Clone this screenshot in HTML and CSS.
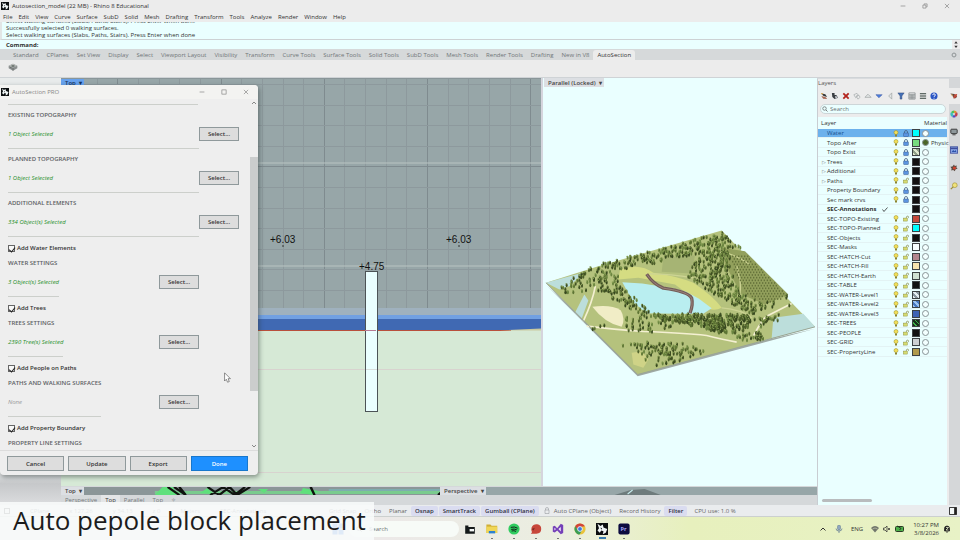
FILE: index.html
```html
<!DOCTYPE html>
<html lang="en">
<head>
    <meta charset="UTF-8">
    <meta name="viewport" content="width=device-width, initial-scale=1.0">
    <title>Autosection_model - Rhino 8 Educational</title>
    <link rel="stylesheet" href="styles.css">
</head>
<body>
    <svg class="defs" aria-hidden="true">
        <symbol id="rhino" viewBox="0 0 16 16"><rect width="16" height="16" fill="#0c0f10"/><path d="M2 1l4 3 3-2 1 4 5 2-2 5-4 2 1-4-3-1-2 3-3-3 2-3z" fill="#eef4f4"/><path d="M6 6l2 1-1 2z" fill="#0c0f10"/></symbol>
        <symbol id="bulb" viewBox="0 0 12 14"><circle cx="6" cy="5" r="4" fill="#f2e05a" stroke="#9a8a20"/><path d="M4 9h4v4H4z" fill="#8b8430"/></symbol>
        <symbol id="locked" viewBox="0 0 12 14"><path d="M3 7V4a3 3 0 0 1 6 0v3" fill="none" stroke="#4a5f80" stroke-width="1.6"/><rect x="1.500" y="6" width="9" height="7" fill="#5b94e0" stroke="#35588c"/></symbol>
        <symbol id="unlocked" viewBox="0 0 14 14"><path d="M8 7V4a2.500 2.500 0 0 1 5 0v2" fill="none" stroke="#7d7d3a" stroke-width="1.500"/><rect x="1" y="6" width="9" height="7" fill="#d6dc72" stroke="#868630"/></symbol>
        <symbol id="gear" viewBox="0 0 12 12"><circle cx="6" cy="6" r="3.500" fill="none" stroke="#8d9294" stroke-width="1.400"/><path d="M6 0v3M6 9v3M0 6h3M9 6h3M2 2l2 2M8 8l2 2M10 2L8 4M4 8l-2 2" stroke="#8d9294"/></symbol>
        <symbol id="min" viewBox="0 0 10 10"><path d="M1 5h8" stroke="#777"/></symbol>
        <symbol id="max" viewBox="0 0 10 10"><rect x="1.500" y="1.500" width="7" height="7" fill="none" stroke="#777"/></symbol>
        <symbol id="restore" viewBox="0 0 10 10"><path d="M1.500 3.500h5v5h-5zM3.500 3V1.500h5v5H7" fill="none" stroke="#777"/></symbol>
        <symbol id="close" viewBox="0 0 10 10"><path d="M1.500 1.500l7 7M8.500 1.500l-7 7" stroke="#777"/></symbol>
        <symbol id="lens" viewBox="0 0 12 12"><circle cx="5" cy="5" r="3.500" fill="none" stroke="#555" stroke-width="1.300"/><path d="M8 8l3 3" stroke="#555" stroke-width="1.500"/></symbol>
    </svg>

    <header class="titlebar">
        <svg class="icon"><use href="#rhino"/></svg>
        <h1>Autosection_model (22 MB) - Rhino 8 Educational</h1>
        <div class="window-controls">
            <button aria-label="Minimize"><svg><use href="#min"/></svg></button>
            <button aria-label="Restore"><svg><use href="#restore"/></svg></button>
            <button aria-label="Close"><svg><use href="#close"/></svg></button>
        </div>
    </header>

    <nav class="menubar">
        <button>File</button><button>Edit</button><button>View</button><button>Curve</button><button>Surface</button><button>SubD</button><button>Solid</button><button>Mesh</button><button>Drafting</button><button>Transform</button><button>Tools</button><button>Analyze</button><button>Render</button><button>Window</button><button>Help</button>
    </nav>

    <section class="command">
        <div class="history">
            <p>Select walking surfaces (Slabs, Paths, Stairs). Press Enter when done</p>
            <p>Successfully selected 0 walking surfaces.</p>
            <p>Select walking surfaces (Slabs, Paths, Stairs). Press Enter when done</p>
        </div>
        <div class="prompt">
            <label for="command">Command:</label>
            <input id="command" type="text">
            <svg class="spinner" viewBox="0 0 8 16"><path d="M1 6l3-4 3 4zM1 10l3 4 3-4z" fill="#333"/></svg>
        </div>
    </section>

    <nav class="tool-tabs">
        <button>Standard</button><button>CPlanes</button><button>Set View</button><button>Display</button><button>Select</button><button>Viewport Layout</button><button>Visibility</button><button>Transform</button><button>Curve Tools</button><button>Surface Tools</button><button>Solid Tools</button><button>SubD Tools</button><button>Mesh Tools</button><button>Render Tools</button><button>Drafting</button><button>New in V8</button><button class="active">AutoSection</button>
        <svg class="gear"><use href="#gear"/></svg>
    </nav>

    <div class="toolbar">
        <button aria-label="AutoSection">
            <svg viewBox="0 0 30 24"><path d="M2 8L15 2l13 6v8l-13 7L2 16z" fill="#8b8f8f"/><path d="M2 8l13 6 13-6-13-6z" fill="#b9bdbb"/><path d="M8 9l7-3 7 3-7 3z" fill="#636b66"/><path d="M15 14v9M6 13l5 2" stroke="#5d6260" stroke-width="2"/></svg>
        </button>
    </div>

    <main class="workspace">
        <aside class="left-tools"></aside>

        <div class="viewports">
            <div class="pane top-pane">
                <button class="pane-label selected">Top <span>▾</span></button>
                <svg class="scene" viewBox="61 79 480 407" preserveAspectRatio="xMinYMin slice">
                    <rect x="61" y="79" width="1200" height="232" fill="#97a6a8"/>
                    <g id="grid"></g>
                    <path d="M61 163h1200M61 266h1200" stroke="#b9c4c2"/>
                    <rect x="61" y="308" width="1200" height="8" fill="#9fb1be"/>
                    <rect x="61" y="315" width="1200" height="5" fill="#71a0e2"/>
                    <rect x="61" y="319" width="1200" height="11" fill="#4069b3"/>
                    <rect x="61" y="330" width="1200" height="600" fill="#d6e9d6"/>
                    <path d="M61 330.500h450" stroke="#b9503c"/>
                    <path d="M500 330.500l41-2v2z" fill="#c9c9a0"/>
                    <path d="M61 369.500h1200M61 472.500h1200" stroke="#d8d3cf"/>
                    <rect x="365.500" y="271.500" width="12" height="140" fill="#eaffff" stroke="#4c5356"/>
                    <path d="M365 330.500h11" stroke="#b77a92"/><path d="M366 369.500h11" stroke="#d9dfdc"/>
                    <text x="270" y="243">+6.03</text>
                    <text x="446" y="243">+6.03</text>
                    <text x="359" y="270">+4.75</text>
                    <path d="M282 246h2M458 246h2" stroke="#333"/>
                </svg>
            </div>

            <div class="pane parallel-pane">
                <button class="pane-label">Parallel (Locked) <span>▾</span></button>
                <svg class="scene" viewBox="9 -423 822 1221">
                    <path d="M18 196L293 470l532-142-530 122z" fill="#9fa9a4"/>
                    <path d="M18 190L170 142 545 33 825 322 293 465z" fill="#b5c27d"/>
                    <path d="M18 190l115-32-45 42-30 10zM105 280l28-55 12 18-20 55zM700 295l90-12 35 39-130 34z" fill="#bcdedb"/>
                    <path d="M545 85l70 10 130 130-70 30-70-30-50-90z" fill="#92a05c"/>
                    <path d="M370 115l95-8-10 55-90-5z" fill="#a6b474"/>
                    <path d="M240 150q60-20 100 10 70 10 120 30 60 40 85 75-30 15-60-10l-80-60-110-20-60 5z" fill="#d5dc82"/>
                    <path d="M247 188l60 4 90 14 40 10 40 22 38 28-25 17-80 0-90-2-40-32z" fill="#b9eef0"/>
                    <path d="M320 164q20 30 50 42 75 10 85 30 5 20-5 45" fill="none" stroke="#735d58" stroke-width="10"/>
                    <path d="M320 164q20 30 50 42 75 10 85 30 5 20-5 45" fill="none" stroke="#9a817a" stroke-width="3"/>
                    <path d="M157 262q55-8 85 10 15 25 3 50-50-10-88-60z" fill="#f1edc6"/>
                    <path d="M166 200q-8 45-36 105M140 320q80 10 170 16 120 4 190 12 50 12 90 20M640 350q20-40 40-60 30-15 75-38" fill="none" stroke="#f4f0d2" stroke-width="5"/>
                    <path d="M330 163q60 0 130 12M590 140q15 50 10 80M480 95q80-10 150 40M545 265q60 5 90 30" fill="none" stroke="#cdd494" stroke-width="4"/>
                    <path d="M18 190L293 465 825 322" fill="none" stroke="#9aa596" stroke-width="3"/>
                    <path d="M275 400l30-5 20 25-15 25-30-10z" fill="#cfd387"/>
                    <g id="trees"></g>
                </svg>
            </div>

            <div class="pane lower-pane">
                <button class="pane-label">Top <span>▾</span></button>
                <svg class="strip" viewBox="0 0 355 8" preserveAspectRatio="none">
                    <rect width="355" height="8" fill="#8b9698"/>
                    <path d="M55 4h300v3H55z" fill="#7acb8e"/>
                    <path d="M55 8l6-8h8l4 8zM90 6l6-5 4 6zM135 2h8l-3 4zM170 1l12 3-4 4-10-2zM285 2h25v5h-25z" fill="#5fe07c"/>
                    <path d="M190 3h165" stroke="#73c4c4"/>
                    <path d="M65 0l9 8M70 0l9 8M74 0l5 8M96 0l9 8 8-8 6 8 10-8M98 8l10-8 9 8 8-8M176 0l3 8M275 8l7-8M280 8l7-8M315 0v8" stroke="#10130f" stroke-width="2" fill="none"/>
                </svg>
            </div>

            <div class="pane lower-pane">
                <button class="pane-label">Perspective <span>▾</span></button>
                <svg class="strip" viewBox="0 0 330 8" preserveAspectRatio="none">
                    <rect width="330" height="8" fill="#97a6a8"/>
                    <path d="M128 8l16-5 14-1 16 6z" fill="#6e7b7c"/><path d="M141 7l5-4" stroke="#c9eef0"/>
                </svg>
            </div>

            <nav class="view-tabs">
                <button>Perspective</button><button class="active">Top</button><button>Parallel</button><button>Top</button><button>✧</button>
            </nav>
        </div>

        <aside class="layers">
            <div class="layers-title"><h2>Layers</h2><svg class="gear"><use href="#gear"/></svg></div>
            <div class="layers-tools">
                <button aria-label="New layer"><svg viewBox="0 0 18 18"><path d="M2 3l10 2 4 6-8-2z" fill="#35393b"/><path d="M3 9l10 3 3 4-9-1z" fill="#a96a55"/><path d="M2 2l5 1-2 4z" fill="#e0a94c"/></svg></button>
                <button aria-label="New sublayer"><svg viewBox="0 0 18 18"><path d="M2 2h6v5h4l4 6-8 3-5-5z" fill="#3a3e42"/><path d="M9 9l5 1 1 4-5 0z" fill="#c8cbd0"/></svg></button>
                <button aria-label="Delete"><svg viewBox="0 0 18 18"><path d="M3 3l12 12M15 3L3 15" stroke="#b3221c" stroke-width="4"/></svg></button>
                <button aria-label="Duplicate"><svg viewBox="0 0 18 18"><path d="M2 6l7-3 3 5-6 5zM7 9l6-2 3 5-5 4z" fill="none" stroke="#a3a9aa" stroke-width="1.500"/></svg></button>
                <button aria-label="Move up"><svg viewBox="0 0 18 18"><path d="M2 12l7-7 7 7z" fill="#e2e6e6" stroke="#999f9f" stroke-width="1.500"/></svg></button>
                <button aria-label="Move down"><svg viewBox="0 0 18 18"><path d="M2 6l7 7 7-7z" fill="#4f7fe0" stroke="#2a4790"/></svg></button>
                <button aria-label="Move left"><svg viewBox="0 0 18 18"><path d="M13 2L6 9l7 7z" fill="#e2e6e6" stroke="#999f9f" stroke-width="1.500"/></svg></button>
                <button aria-label="Filter"><svg viewBox="0 0 18 18"><path d="M2 2h14l-5 7v7H7V9z" fill="#4571b8" stroke="#28406e"/></svg></button>
                <button aria-label="Columns"><svg viewBox="0 0 18 18"><path d="M2 2h14v14H2zM2 6h14M2 9h14M2 13h14M7 6v10M11 6v10" fill="none" stroke="#777e80" stroke-width="1.500"/></svg></button>
                <button aria-label="Options"><svg viewBox="0 0 18 18"><path d="M2 4h14M2 9h14M2 14h14" stroke="#32403a" stroke-width="2.500"/></svg></button>
                <button aria-label="Help"><svg viewBox="0 0 18 18"><circle cx="9" cy="9" r="8" fill="#2a55c4"/><path d="M6 7q0-3 3-3t3 3q0 2-3 3v1M9 13v2" stroke="#fff" stroke-width="2" fill="none"/></svg></button>
            </div>
            <label class="search"><svg><use href="#lens"/></svg><input type="search" placeholder="Search" aria-label="Search layers"></label>
            <div class="layers-body">
                <table>
                    <colgroup><col><col class="c-check"><col class="c-bulb"><col class="c-lock"><col class="c-swatch"><col class="c-ball"><col class="c-material"></colgroup>
                    <thead><tr><th colspan="5">Layer</th><th colspan="2" class="material">Material</th></tr></thead>
                    <tbody id="layers"></tbody>
                </table>
                <div class="hscroll"></div>
            </div>
        </aside>

        <aside class="panel-tabs">
            <button aria-label="Properties"><svg viewBox="0 0 20 20"><path d="M1 4l10 1 7 7-6 5z" fill="#55463e"/><path d="M10 6l8-1-2 8-8 3z" fill="#c14838"/><path d="M2 5l5 2-1 4z" fill="#e8ae67"/></svg></button>
            <button aria-label="Display"><svg viewBox="0 0 20 20"><g fill="none" stroke-width="6"><path d="M10 4a6 6 0 0 1 5 3" stroke="#e0912f"/><path d="M15 7a6 6 0 0 1-2 8" stroke="#c43f4d"/><path d="M13 15a6 6 0 0 1-6 0" stroke="#5949c0"/><path d="M7 15a6 6 0 0 1-2-8" stroke="#3dbcc0"/><path d="M5 7a6 6 0 0 1 5-3" stroke="#49c25b"/></g></svg></button>
            <button aria-label="Monitor"><svg viewBox="0 0 20 20"><rect x="2" y="3" width="16" height="11" rx="2" fill="#8e989c" stroke="#222" stroke-width="2"/><path d="M6 17h8" stroke="#222" stroke-width="2"/></svg></button>
            <button aria-label="Layers"><svg viewBox="0 0 20 20"><rect x="1" y="2" width="18" height="16" fill="#8aa8e8" stroke="#3d4c9b" stroke-width="2"/><path d="M1 6h18" stroke="#3d4c9b" stroke-width="4"/><path d="M4 15l4-5 3 3 3-3 2 5z" fill="#2c50a8"/></svg></button>
            <button aria-label="Rendering"><svg viewBox="0 0 20 20"><path d="M10 1l2 4 5-1-1 5 3 3-5 1-2 5-4-3-5 1 1-5-3-4 5-1z" fill="#5c4b42"/><circle cx="11" cy="10" r="4" fill="#d2432e"/></svg></button>
            <button aria-label="Notes"><svg viewBox="0 0 20 20"><circle cx="12" cy="8" r="6" fill="#f0e27a" stroke="#9c8d34" stroke-width="1.500"/><path d="M8 12l-6 6" stroke="#9c8d34" stroke-width="3"/></svg></button>
        </aside>
    </main>

    <footer class="statusbar">
        <div class="coords"><i class="box"></i><span>CPlane</span><span>x 127.26</span><span>y 34.13</span><span>z 0</span><span>Meters</span><span>SEC-Annotations</span></div>
        <button>Grid Snap</button><button>Ortho</button><button>Planar</button><button class="on">Osnap</button><button class="on">SmartTrack</button><button class="on">Gumball (CPlane)</button>
        <button class="auto"><svg viewBox="0 0 12 14"><path d="M3 6V4a3 3 0 0 1 6 0v2M2 6h8v7H2z" fill="none" stroke="#8a8f92"/></svg>Auto CPlane (Object)</button><button>Record History</button><button class="on">Filter</button><span class="cpu">CPU use: 1.0 %</span>
        <svg class="dock" viewBox="0 0 14 14"><rect x="1" y="1" width="12" height="12" fill="#f3f7f7" stroke="#222" stroke-width="1.500"/><path d="M9 1h4v12H9z" fill="#222"/></svg>
    </footer>

    <footer class="taskbar">
        <div class="dock-icons">
            <button class="start" aria-label="Start"><svg viewBox="0 0 24 24"><path d="M1 1h10v10H1zM13 1h10v10H13zM1 13h10v10H1zM13 13h10v10H13z" fill="#2d74dc"/></svg></button>
            <label class="task-search"><svg><use href="#lens"/></svg><input type="search" placeholder="Search" aria-label="Search Windows"></label>
            <button aria-label="Task view"><svg viewBox="0 0 30 30"><path d="M3 6h8v4h16v17H3z" fill="#15191a"/><path d="M14 15h11v6H14z" fill="#f5f8f8"/></svg></button>
            <button class="running" aria-label="Files"><svg viewBox="0 0 30 30"><path d="M1 4h10l3 3h14v18H1z" fill="#cfae36"/><path d="M1 9h27v16H1z" fill="#f0d656"/><path d="M7 20h16v6H7z" fill="#2d83cf"/></svg></button>
            <button class="running" aria-label="Music"><svg viewBox="0 0 30 30"><circle cx="15" cy="15" r="14" fill="#30cc60"/><path d="M7 11q9-3 17 2M8 16q8-2 14 1M9 20q6-2 11 1" stroke="#10291a" stroke-width="2.500" fill="none"/></svg></button>
            <button class="running" aria-label="App"><svg viewBox="0 0 30 30"><path d="M4 11Q8 2 18 3q10 1 10 12 0 11-12 12H2l3-4q-3-4-1-12z" fill="#c7473b"/><path d="M4 15l8-3-3 7z" fill="#7e2a25"/></svg></button>
            <button class="running" aria-label="Studio"><svg viewBox="0 0 30 30"><path d="M2 9l5-2 6 6 9-11 6 3v20l-6 3-9-9-6 5-5-2z" fill="#7440b8"/><path d="M6 12v7l4-4zM22 10v11l-6-6z" fill="#efe5fa"/></svg></button>
            <button class="running" aria-label="Chrome"><svg viewBox="0 0 30 30"><circle cx="15" cy="15" r="14" fill="#e9c33a"/><path d="M3 8a14 14 0 0 1 24 0L15 10l-6 8z" fill="#d3453a"/><path d="M3 8a14 14 0 0 0 11 21l5-9-9-1z" fill="#3a9d55"/><circle cx="15" cy="15" r="6" fill="#3c7be0" stroke="#fff" stroke-width="2"/></svg></button>
            <button class="front" aria-label="Rhino"><svg><use href="#rhino"/></svg></button>
            <button class="running" aria-label="Premiere"><svg viewBox="0 0 30 30"><rect x="1" y="1" width="28" height="28" rx="5" fill="#0c0b40"/><text x="6" y="21" class="pr">Pr</text></svg></button>
        </div>
        <div class="tray">
            <svg viewBox="0 0 16 16"><path d="M3 11l5-5 5 5" fill="none" stroke="#333" stroke-width="2"/></svg>
            <svg viewBox="0 0 16 16"><rect x="5" y="0" width="6" height="10" rx="3" fill="#8fa6be" stroke="#5f7791"/><path d="M2 7q0 5 6 5t6-5M8 12v4" fill="none" stroke="#5f7791" stroke-width="1.500"/></svg>
            <span class="lang">ENG</span>
            <div class="net">
                <svg viewBox="0 0 16 16"><path d="M0 6q8-8 16 0l-8 9z" fill="#70766b"/><path d="M3 8q5-4 10 0" stroke="#e9efcb" fill="none"/></svg>
                <svg viewBox="0 0 16 16"><path d="M1 6h3l4-4v12l-4-4H1z" fill="none" stroke="#333" stroke-width="1.500"/><path d="M10 6l4 4M14 6l-4 4" stroke="#333" stroke-width="1.500"/></svg>
                <svg class="battery" viewBox="0 0 20 16"><rect x="1" y="3" width="16" height="10" rx="2" fill="#4db04a" stroke="#2a3b24" stroke-width="2"/><path d="M5 2l7 5-3 3" stroke="#23311f" stroke-width="2" fill="none"/></svg>
            </div>
            <div class="clock"><span>10:27 PM</span><span>3/8/2026</span></div>
            <svg viewBox="0 0 16 16"><path d="M3 12V7q0-5 5-5t5 5v5zM6 14h4" fill="#222" stroke="#222" stroke-width="1.500"/><path d="M6 5h5l-5 5h5" stroke="#eef3d0" stroke-width="1.500" fill="none"/></svg>
        </div>
    </footer>

    <section class="dialog" role="dialog" aria-labelledby="dialog-title">
        <div class="dialog-title">
            <svg class="icon"><use href="#rhino"/></svg>
            <h2 id="dialog-title">AutoSection PRO</h2>
            <div class="window-controls">
                <button aria-label="Minimize"><svg><use href="#min"/></svg></button>
                <button aria-label="Maximize"><svg><use href="#max"/></svg></button>
                <button aria-label="Close"><svg><use href="#close"/></svg></button>
            </div>
        </div>
        <div class="dialog-body">
            <div class="settings">
                <div class="group wide"><div class="info"><h3>EXISTING TOPOGRAPHY</h3><p>1 Object Selected</p></div><button class="btn">Select...</button></div>
                <div class="group wide"><div class="info"><h3>PLANNED TOPOGRAPHY</h3><p>1 Object Selected</p></div><button class="btn">Select...</button></div>
                <div class="group wide"><div class="info"><h3>ADDITIONAL ELEMENTS</h3><p>334 Object(s) Selected</p></div><button class="btn">Select...</button></div>
                <label class="check"><input type="checkbox" checked>Add Water Elements</label>
                <div class="group"><div class="info"><h3>WATER SETTINGS</h3><p>3 Object(s) Selected</p></div><button class="btn">Select...</button></div>
                <label class="check"><input type="checkbox" checked>Add Trees</label>
                <div class="group"><div class="info"><h3>TREES SETTINGS</h3><p>2390 Tree(s) Selected</p></div><button class="btn">Select...</button></div>
                <label class="check"><input type="checkbox" checked>Add People on Paths</label>
                <div class="group"><div class="info"><h3>PATHS AND WALKING SURFACES</h3><p class="none">None</p></div><button class="btn">Select...</button></div>
                <label class="check"><input type="checkbox" checked>Add Property Boundary</label>
                <div class="group"><div class="info"><h3>PROPERTY LINE SETTINGS</h3></div></div>
            </div>
            <div class="scrollbar">
                <svg viewBox="0 0 8 8"><path d="M2 5l2-2 2 2" fill="none" stroke="#888"/></svg>
                <div class="thumb"></div>
                <svg viewBox="0 0 8 8"><path d="M2 3l2 2 2-2" fill="none" stroke="#888"/></svg>
            </div>
        </div>
        <div class="dialog-actions">
            <button class="btn">Cancel</button>
            <button class="btn">Update</button>
            <button class="btn">Export</button>
            <button class="btn primary">Done</button>
        </div>
        <svg class="cursor" viewBox="0 0 12 18"><path d="M1 1v14l3-3 2 5 3-1-2-5h4z" fill="#fff" stroke="#444"/></svg>
    </section>

    <div class="caption">Auto pepole block placement</div>

    <script src="script.js"></script>
</body>
</html>
```
FILE: styles.css
```css
* {
    box-sizing: border-box;
}

body {
    margin: 0;
    min-height: 100vh;
    display: flex;
    flex-direction: column;
    position: relative;
    overflow: hidden;
    background: #ececec;
    color: #333;
    font-family: "Open Sans", "Noto Sans", sans-serif;
    font-size: 6px;
    line-height: 8px;
}

h1, h2, h3, p {
    margin: 0;
    font-size: inherit;
    font-weight: normal;
}

button, input {
    margin: 0;
    padding: 0;
    border: none;
    background: none;
    color: inherit;
    font: inherit;
}

svg {
    display: block;
}

.defs {
    position: absolute;
    width: 0;
    height: 0;
}

.gear {
    width: 6px;
    height: 6px;
}

/* title and menus */
.titlebar {
    display: flex;
    align-items: center;
    height: 12px;
    padding: 0 10px 0 1px;
    gap: 3px;
}

.icon {
    width: 8px;
    height: 8px;
}

.window-controls {
    display: flex;
    gap: 16px;
    margin-left: auto;
}

.window-controls svg {
    width: 6px;
    height: 6px;
}

.menubar {
    display: flex;
    gap: 6px;
    height: 10px;
    padding-left: 3px;
}

.command {
    background: #eaffff;
}

.history {
    height: 18px;
    display: flex;
    flex-direction: column;
    justify-content: flex-end;
    overflow: hidden;
    padding-left: 4px;
    border-left: 2px solid #e2e6e6;
    border-bottom: 1px solid #cdd2d4;
    line-height: 7px;
}

.history p {
    flex: none;
}

.prompt {
    display: flex;
    align-items: center;
    height: 9px;
    padding-left: 6px;
    gap: 2px;
    font-weight: bold;
}

.prompt input {
    flex: 1;
    min-width: 0;
    height: 8px;
}

.spinner {
    width: 8px;
    height: 9px;
    background: #ececec;
}

.tool-tabs {
    display: flex;
    align-items: center;
    height: 11px;
    padding: 0 3px 0 9px;
    background: #d6d9da;
    color: #707678;
}

.tool-tabs button {
    height: 11px;
    padding: 0 4px;
}

.tool-tabs .active {
    height: 10px;
    align-self: flex-end;
    border-radius: 3px 3px 0 0;
    background: #ececec;
    color: #333;
}

.tool-tabs .gear {
    margin-left: auto;
}

.toolbar {
    height: 18px;
    padding: 3px 8px;
    border-bottom: 1px solid #cfd3d6;
}

.toolbar svg {
    width: 10px;
    height: 8px;
}

/* workspace */
.workspace {
    flex: 1;
    min-height: 0;
    display: grid;
    grid-template-columns: 61px 1fr 132px 11px;
}

.left-tools {
    background: linear-gradient(#e8ebeb 92%, #c6c8ca 95%, #dcdddf);
}

.viewports {
    display: grid;
    grid-template-columns: 480fr 276fr;
    grid-template-rows: 1fr 9px 10px;
    min-height: 0;
    background: #d5d8da;
}

.pane {
    position: relative;
    min-width: 0;
    min-height: 0;
    overflow: hidden;
}

.pane-label {
    display: flex;
    align-items: center;
    gap: 3px;
    height: 8px;
    padding: 0 2px 0 4px;
    background: #dcdfe3;
    color: #444;
    font-weight: 600;
}

.top-pane .pane-label,
.parallel-pane .pane-label {
    position: absolute;
    top: 0;
    left: 0;
}

.parallel-pane .pane-label {
    left: 1px;
    height: 9px;
}

.pane-label.selected {
    background: #67a2ee;
    color: #16335c;
}

.scene {
    width: 100%;
    height: 100%;
}

.scene text {
    font: 10px "Liberation Sans", sans-serif;
    fill: #111;
}

.top-pane {
    border-top: 1px solid #8a9699;
}

.parallel-pane {
    border-left: 2px solid #d5d5dd;
    background: #eaffff;
}

.lower-pane {
    display: flex;
    padding-top: 1px;
    overflow: visible;
}

.lower-pane + .lower-pane {
    margin-left: -101px;
}

.strip {
    flex: 1;
    min-width: 0;
    height: 8px;
}

.view-tabs {
    grid-column: 1 / -1;
    display: flex;
    color: #74787b;
}

.view-tabs button {
    padding: 0 4px;
}

.view-tabs .active {
    background: #e4e6e7;
    color: #333;
}

/* layers */
.layers {
    display: flex;
    flex-direction: column;
    min-width: 0;
    min-height: 0;
    border-left: 1px solid #c9cdd2;
    border-top: 1px solid #d8dbde;
    padding: 0 2px 0 0;
}

.layers-title {
    display: flex;
    justify-content: space-between;
    align-items: center;
    height: 8px;
    margin-right: -9px;
    color: #555;
}

.layers-tools {
    display: flex;
    align-items: center;
    gap: 3px;
    height: 17px;
    padding-left: 2px;
}

.layers-tools svg {
    width: 8px;
    height: 8px;
}

.search {
    display: flex;
    align-items: center;
    gap: 2px;
    height: 10px;
    margin: 0 1px 3px 2px;
    padding-left: 1px;
    border: 1px solid #cdd6d8;
    border-radius: 5px;
    background: #eaffff;
}

.search svg,
.task-search svg {
    width: 6px;
    height: 6px;
}

.search input,
.task-search input {
    width: 60px;
    outline: none;
    color: #555;
}

input::placeholder {
    color: #6d7274;
    opacity: 1;
}

.layers-body {
    flex: 1;
    min-height: 0;
    display: flex;
    flex-direction: column;
    justify-content: space-between;
    background: #eaffff;
}

.layers table {
    width: 100%;
    height: 240px;
    border-collapse: collapse;
    table-layout: fixed;
}

.c-check {
    width: 11px;
}

.c-bulb,
.c-swatch {
    width: 10px;
}

.c-lock,
.c-ball {
    width: 9px;
}

.c-material {
    width: 16px;
}

.layers th,
.layers td {
    padding: 0;
    line-height: 8px;
    white-space: nowrap;
    vertical-align: middle;
}

.layers th {
    height: 12px;
    padding-left: 3px;
    font-weight: normal;
    text-align: left;
}

.layers .material {
    padding-left: 2px;
}

.layers td svg {
    width: 6px;
    height: 7px;
}

.layers tbody tr {
    border-bottom: 1px solid #e3f3f4;
}

.twist {
    display: inline-block;
    width: 9px;
    padding-left: 4px;
    color: #777;
    font-size: 5px;
}

.layers .selected {
    background: #6cb1ec;
    color: #17508c;
}

.layers .current {
    font-weight: bold;
}

.swatch {
    display: block;
    width: 8px;
    height: 8px;
    border: 1px solid #3d4244;
}

.ball {
    display: block;
    width: 7px;
    height: 7px;
    border: 1px solid #889396;
    border-radius: 50%;
    background: #f3ffff;
}

.ball.filled {
    background: #4b6628;
}

.hscroll {
    width: 50px;
    height: 3px;
    margin: 0 0 3px 4px;
    border-radius: 2px;
    background: #b9bcbe;
}

.panel-tabs {
    display: flex;
    flex-direction: column;
    gap: 2px;
    padding-top: 10px;
    background: #d5d7d9;
}

.panel-tabs button {
    height: 16px;
    padding-left: 1px;
}

.panel-tabs button:first-child {
    background: #ececec;
}

.panel-tabs svg {
    width: 8px;
    height: 8px;
}

/* status bar */
.statusbar {
    display: flex;
    align-items: center;
    height: 12px;
    padding: 0 3px 0 4px;
    background: #eaecee;
    border-bottom: 1px solid #ccd0cf;
    color: #666;
}

.coords {
    display: flex;
    align-items: center;
    flex: none;
    gap: 20px;
    width: 321px;
}

.box {
    width: 6px;
    height: 6px;
    border: 1px solid #555;
}

.statusbar button {
    height: 10px;
    padding: 0 4px;
    flex: none;
}

.statusbar .on {
    margin-right: 1px;
    border-radius: 2px;
    background: #dadcf0;
    color: #2e3040;
    font-weight: 600;
}

.auto {
    display: flex;
    align-items: center;
    gap: 4px;
}

.auto svg {
    width: 6px;
    height: 7px;
}

.cpu {
    padding-left: 6px;
}

.dock {
    width: 8px;
    height: 8px;
    margin-left: auto;
}

/* taskbar */
.taskbar {
    display: flex;
    align-items: center;
    justify-content: space-between;
    height: 23px;
    padding: 0 9px 0 332px;
    background: linear-gradient(90deg, #ece9e8 40%, #ebeee0 58%, #e7f0bd 72%, #e8f2c6);
}

.dock-icons {
    display: flex;
    align-items: center;
    gap: 10px;
}

.dock-icons button {
    position: relative;
}

.dock-icons button svg {
    width: 12px;
    height: 12px;
}

.dock-icons .start {
    margin-right: -5px;
}

.task-search {
    display: flex;
    align-items: center;
    gap: 7px;
    width: 110px;
    height: 16px;
    margin-right: -5px;
    padding-left: 7px;
    border-radius: 8px;
    background: #f7fbf7;
}

.running::after,
.front::after {
    content: "";
    position: absolute;
    left: 5px;
    bottom: -4px;
    width: 2px;
    height: 1px;
    background: #777;
}

.dock-icons .front::after {
    left: 3px;
    width: 7px;
    height: 2px;
    background: #3a7cae;
}

.pr {
    font: bold 14px "Open Sans", sans-serif;
    fill: #a5a4f5;
}

.tray {
    display: flex;
    align-items: center;
    gap: 8px;
}

.tray svg {
    width: 8px;
    height: 8px;
}

.tray .battery {
    width: 10px;
}

.net {
    display: flex;
    gap: 4px;
}

.clock {
    display: flex;
    flex-direction: column;
    text-align: right;
    margin-right: -4px;
}

/* AutoSection dialog, floats over the viewports */
.dialog {
    position: absolute;
    left: 0;
    top: 85px;
    width: 258px;
    height: 390px;
    display: flex;
    flex-direction: column;
    border-radius: 0 4px 4px 4px;
    background: #eeeeee;
    box-shadow: 1px 2px 5px rgba(40, 50, 50, 0.5);
}

.dialog-title {
    display: flex;
    align-items: center;
    gap: 3px;
    height: 14px;
    padding: 0 9px 0 1px;
    border-radius: 0 4px 0 0;
    background: #f3f3f1;
    color: #888;
}

.dialog-body {
    flex: 1;
    min-height: 0;
    display: flex;
    justify-content: space-between;
    border-bottom: 1px solid #dcdcdc;
}

.settings {
    flex: 1;
    padding: 5px 0 0 8px;
    overflow: hidden;
}

.settings::before {
    content: "";
    display: block;
    width: 190px;
    border-top: 1px solid #cccfcb;
}

.group {
    display: flex;
    justify-content: space-between;
    align-items: flex-end;
    width: 191px;
}

.group.wide {
    width: 231px;
}

.info {
    border-bottom: 1px solid #cccfcb;
    padding-bottom: 10px;
}

.wide .info {
    flex: 1;
    padding-top: 6px;
}

.info h3 {
    margin-bottom: 11px;
    color: #5c6063;
    font-weight: 600;
}

.info p {
    color: #1f8f28;
    font-style: italic;
    font-weight: 500;
}

.info .none {
    color: #999;
    font-weight: normal;
}

.btn {
    height: 15px;
    border: 1px solid #8f999b;
    background: #dddddd;
    color: #333;
    font-weight: 600;
}

.group .btn {
    width: 40px;
    height: 14px;
    margin-bottom: 8px;
}

.check {
    display: flex;
    align-items: center;
    gap: 2px;
    height: 15px;
    padding: 7px 0 0;
    margin-bottom: 7px;
    font-weight: 600;
}

.check input {
    appearance: none;
    width: 7px;
    height: 7px;
    border: 1px solid #666;
    background: #f7f7f7;
}

.check input:checked::before {
    content: "";
    display: block;
    width: 3px;
    height: 5px;
    margin-left: 1px;
    border: solid #222;
    border-width: 0 1px 1px 0;
    transform: rotate(40deg);
}

.scrollbar {
    display: flex;
    flex-direction: column;
    width: 8px;
}

.scrollbar svg {
    width: 8px;
    height: 8px;
}

.thumb {
    height: 234px;
    margin: 50px 0 auto;
    background: #cbcdcd;
}

.dialog-actions {
    display: grid;
    grid-template-columns: repeat(4, 1fr);
    gap: 4px;
    padding: 5px 10px 4px 7px;
}

.btn.primary {
    border-color: #1877cc;
    background: #1e90ff;
    color: #fff;
}

.cursor {
    position: absolute;
    left: 224px;
    top: 287px;
    width: 7px;
    height: 11px;
}

/* subtitle strip */
.caption {
    position: absolute;
    left: 0;
    bottom: 0;
    height: 38px;
    padding: 0 8px 0 13px;
    background: rgba(248, 250, 250, 0.88);
    color: #1c1c1c;
    font-size: 26px;
    line-height: 36px;
    white-space: nowrap;
}
```
FILE: script.js
```js
// layer rows: name, lock state, swatch fill, extra
const layers = [
    ['Water', 'locked', '#00ffff', { selected: true }],
    ['Topo After', 'locked', '#76dc80', { material: 'Physic' }],
    ['Topo Exist', 'locked', 'repeating-linear-gradient(45deg, #dfe8cf 0 2px, #8fa089 2px 4px)'],
    ['Trees', 'locked', '#111', { open: true }],
    ['Additional', 'locked', '#111', { open: true }],
    ['Paths', 'unlocked', '#111', { open: true }],
    ['Property Boundary', 'locked', '#111'],
    ['Sec mark crvs', 'locked', '#111'],
    ['SEC-Annotations', '', '#111', { current: true }],
    ['SEC-TOPO-Existing', 'unlocked', '#c34a3c'],
    ['SEC-TOPO-Planned', 'unlocked', '#00ffff'],
    ['SEC-Objects', 'unlocked', '#111'],
    ['SEC-Masks', 'unlocked', '#f7ffff'],
    ['SEC-HATCH-Cut', 'unlocked', '#b3868e'],
    ['SEC-HATCH-Fill', 'unlocked', '#f6e3ae'],
    ['SEC-HATCH-Earth', 'unlocked', '#cfe0d2'],
    ['SEC-TABLE', 'unlocked', '#111'],
    ['SEC-WATER-Level1', 'unlocked', 'repeating-linear-gradient(45deg, #e6eef2 0 2px, #8a979f 2px 4px)'],
    ['SEC-WATER-Level2', 'unlocked', 'repeating-linear-gradient(45deg, #9cc3f0 0 2px, #4778c0 2px 4px)'],
    ['SEC-WATER-Level3', 'unlocked', '#3f63b4'],
    ['SEC-TREES', 'unlocked', 'repeating-linear-gradient(45deg, #16301a 0 2px, #3cb048 2px 3px)'],
    ['SEC-PEOPLE', 'unlocked', '#111'],
    ['SEC-GRID', 'unlocked', '#cdd0d2'],
    ['SEC-PropertyLine', 'unlocked', '#b19a4c']
];

document.getElementById('layers').innerHTML = layers.map(([name, lock, fill, extra = {}]) => `
    <tr class="${extra.selected ? 'selected' : ''} ${extra.current ? 'current' : ''}">
        <td><span class="twist">${extra.open ? '▷' : ''}</span>${name}</td>
        <td>${extra.current ? '<svg viewBox="0 0 12 12"><path d="M1 6l3 4 7-8" fill="none" stroke="#222" stroke-width="1.5"/></svg>' : ''}</td>
        <td>${lock ? '<svg><use href="#bulb"/></svg>' : ''}</td>
        <td>${lock ? `<svg><use href="#${lock}"/></svg>` : ''}</td>
        <td><span class="swatch" style="background: ${fill}"></span></td>
        <td><span class="ball ${extra.material ? 'filled' : ''}"></span></td>
        <td>${extra.material || ''}</td>
    </tr>`).join('');

// construction grid of the Top viewport
let grid = '';
for (let i = 0; i < 60; i++) {
    const x = 76 + Math.round(i * 20.65);
    grid += `<path d="M${x}.5 79V310" stroke="${i % 5 === 2 ? '#7f8b8f' : '#8d999d'}"/>`;
}
for (let i = 0; i < 11; i++) {
    const y = 84 + Math.round(i * 20.6);
    grid += `<path d="M61 ${y}.5H1261" stroke="${i === 4 ? '#7f8b8f' : '#8d999d'}"/>`;
}
document.getElementById('grid').innerHTML = grid;

// trees are scattered inside polygons, with a fixed seed
let seed = 7;
function random() {
    seed = (seed * 16807) % 2147483647;
    return seed / 2147483647;
}

function inside(x, y, poly) {
    let hit = false;
    for (let i = 0, j = poly.length - 1; i < poly.length; j = i++) {
        const [xi, yi] = poly[i];
        const [xj, yj] = poly[j];
        if ((yi > y) !== (yj > y) && x < (xj - xi) * (y - yi) / (yj - yi) + xi) hit = !hit;
    }
    return hit;
}

const woods = [
    [90, 3, [[55, 205], [165, 135], [240, 165], [245, 225], [190, 215], [130, 225], [70, 218]]],
    [220, 3, [[160, 140], [380, 84], [545, 39], [612, 85], [540, 92], [460, 105], [350, 130], [240, 150]]],
    [290, 3, [[460, 130], [500, 92], [570, 95], [570, 150], [600, 220], [690, 260], [640, 285], [540, 235], [440, 170]]],
    [190, 4, [[340, 285], [450, 285], [510, 285], [640, 290], [620, 330], [560, 345], [470, 318], [360, 305]]],
    [60, 3, [[180, 215], [245, 200], [340, 285], [330, 300], [230, 245]]],
    [25, 3, [[260, 280], [340, 305], [430, 325], [300, 330], [255, 320]]],
    [75, 3, [[220, 380], [300, 368], [430, 372], [520, 400], [400, 412], [290, 388]]],
    [30, 3, [[290, 395], [480, 390], [440, 420], [320, 450]]],
    [26, 3, [[590, 350], [670, 335], [670, 360], [600, 365]]],
    [24, 3, [[640, 300], [720, 285], [715, 305], [660, 325]]],
    [8, 3, [[670, 250], [740, 225], [760, 265], [700, 270]]],
    [14, 3, [[140, 315], [350, 325], [350, 340], [150, 330]]]
];

let plants = [];
woods.forEach(([count, size, poly]) => {
    const xs = poly.map(p => p[0]);
    const ys = poly.map(p => p[1]);
    for (let n = 0; n < count;) {
        const x = Math.min(...xs) + random() * (Math.max(...xs) - Math.min(...xs));
        const y = Math.min(...ys) + random() * (Math.max(...ys) - Math.min(...ys));
        if (inside(x, y, poly)) {
            plants.push([Math.round(x), Math.round(y), size]);
            n++;
        }
    }
});
plants.sort((a, b) => a[1] - b[1]);

// orchard rows on the eastern field
const orchard = [[570, 100], [620, 105], [742, 228], [690, 250], [620, 225], [580, 150]];
let marks = '';
for (let y = 100; y < 250; y += 8) {
    for (let x = 570 + (y % 16) / 2; x < 745; x += 9) {
        if (inside(x, y, orchard)) marks += `<rect x="${x}" y="${y}" width="4" height="5" fill="#66743b"/>`;
    }
}

const greens = ['#3f4f22', '#4d5f2a', '#5d7434', '#37481f', '#6b8540'];
marks += plants.map(([x, y, s]) => `<ellipse cx="${x}" cy="${y}" rx="${s}" ry="${s * 2}" fill="${greens[Math.floor(random() * 5)]}"/><circle cx="${x - 2}" cy="${y - 4}" r="2" fill="#8ca457"/>`).join('');
document.getElementById('trees').innerHTML = marks;
```
